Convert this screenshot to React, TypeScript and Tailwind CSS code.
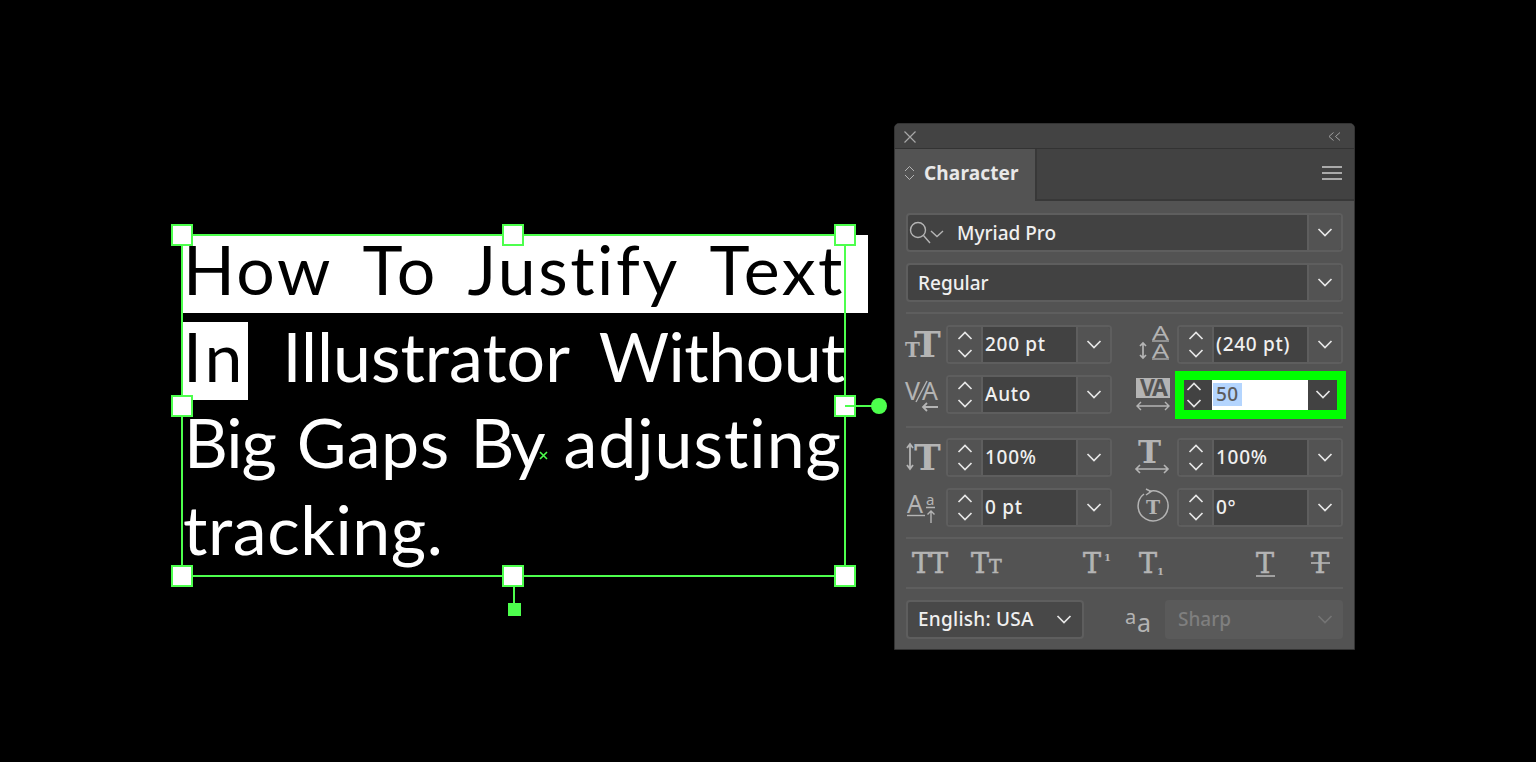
import type { ReactNode } from "react";

const ICON = "#b4b4b4";
const UI_FONT = "font-['Noto_Sans',sans-serif]";
const SERIF = "DejaVu Serif, serif";

function Chevron({ up = false, color = "#e6e6e6" }: { up?: boolean; color?: string }) {
  return (
    <svg width="16" height="9" viewBox="0 0 16 9" fill="none" stroke={color} strokeWidth="1.7">
      <path d={up ? "M1.5 8L8 1.5L14.5 8" : "M1.5 1L8 7.5L14.5 1"} />
    </svg>
  );
}

function Stepper() {
  return (
    <div className="flex h-full w-[33px] shrink-0 flex-col items-center justify-between bg-[#535353] py-[4px]">
      <Chevron up />
      <Chevron />
    </div>
  );
}

function Dropdown() {
  return (
    <div className="flex h-full w-[34px] shrink-0 items-center justify-center border-l-2 border-[#5e5e5e] bg-[#535353]">
      <Chevron />
    </div>
  );
}

function Field({ value }: { value: string }) {
  return (
    <div className="flex h-[39px] w-[166px] shrink-0 items-center overflow-hidden rounded-[4px] border-2 border-[#5e5e5e] bg-[#424242]">
      <Stepper />
      <div className="flex h-full flex-1 items-center border-l-2 border-[#5e5e5e] pl-[2px] text-[19px] font-medium tracking-[0.7px] text-[#f0f0f0]">
        {value}
      </div>
      <Dropdown />
    </div>
  );
}

function TrackingField() {
  return (
    <div className="-my-[5px] flex h-[48px] w-[171px] shrink-0 -translate-x-[2px] items-center overflow-hidden border-[9px] border-[#00ff00] bg-[#424242]">
      <div className="flex h-full w-[28px] shrink-0 flex-col items-start justify-between py-[2px] pl-[2px]">
        <Chevron up />
        <Chevron />
      </div>
      <div className="flex h-full flex-1 items-center bg-white pl-[1px] text-[19px] font-medium text-[#5c5c5c]">
        <span className="bg-[#b4d5fe] px-[3px] leading-[23px] tracking-[0.5px]">50</span>
      </div>
      <div className="flex h-full w-[29px] shrink-0 items-center justify-center">
        <Chevron />
      </div>
    </div>
  );
}

function Icon({ children }: { children: ReactNode }) {
  return (
    <svg width="40" height="39" viewBox="0 0 40 39" fill="none" stroke={ICON} className="shrink-0 overflow-visible">
      {children}
    </svg>
  );
}

function Glyph({ x, y, size, children, bold = false }: { x: number; y: number; size: number; children: string; bold?: boolean }) {
  return (
    <text x={x} y={y} fontSize={size} fontFamily={SERIF} fontWeight={bold ? 700 : 400} fill={ICON} stroke={bold ? "none" : ICON} strokeWidth={bold ? 0 : 0.6}>
      {children}
    </text>
  );
}

function SansGlyph({ x, y, size, width, children }: { x: number; y: number; size: number; width?: number; children: string }) {
  return (
    <text x={x} y={y} fontSize={size} fontFamily="Noto Sans, sans-serif" fill={ICON} stroke="none" textLength={width} lengthAdjust={width ? "spacingAndGlyphs" : undefined}>
      {children}
    </text>
  );
}

function Divider({ className }: { className: string }) {
  return <div className={`h-[2px] w-[437px] bg-[#5e5e5e] ${className}`} />;
}

function Param({ icon, children }: { icon: ReactNode; children: ReactNode }) {
  return (
    <div className="flex h-[39px] w-[206px] items-center">
      {icon}
      {children}
    </div>
  );
}

function ToolGlyph({ children, className = "" }: { children: ReactNode; className?: string }) {
  return (
    <svg width="40" height="30" viewBox="0 0 40 30" fill="none" stroke={ICON} className={`shrink-0 overflow-visible ${className}`}>
      {children}
    </svg>
  );
}

function CharacterPanel() {
  return (
    <div className={`h-[527px] w-[461px] shrink-0 overflow-hidden rounded-t-[5px] border border-[#333] bg-[#535353] ${UI_FONT}`}>
      <div className="flex h-[25px] items-center justify-between border-b border-[#333] bg-[#434343] pl-[8px] pr-[13px] pt-[1px]">
        <svg width="14" height="14" viewBox="0 0 14 14" stroke="#a8a8a8" strokeWidth="1.2">
          <path d="M1.5 1.5L12.5 12.5M12.5 1.5L1.5 12.5" />
        </svg>
        <svg width="13" height="9" viewBox="0 0 13 9" fill="none" stroke="#a0a0a0">
          <path d="M5.5 .5L1 4.5L5.5 8.5M12 .5L7.5 4.5L12 8.5" />
        </svg>
      </div>
      <div className="flex h-[52px]">
        <div className="flex w-[140px] items-center bg-[#535353] pb-[4px] pl-[9px]">
          <svg width="11" height="16" viewBox="0 0 11 16" fill="none" stroke="#b4b4b4">
            <path d="M1 6L5.5 1.5L10 6M1 10L5.5 14.5L10 10" />
          </svg>
          <span className="ml-[9px] text-[19px] font-bold leading-none tracking-[0.15px] text-[#e8e8e8]">Character</span>
        </div>
        <div className="flex flex-1 items-center justify-end border-b-2 border-l-2 border-[#383838] bg-[#424242] pb-[2px] pr-[12px]">
          <div className="flex w-[20px] flex-col gap-[4px]">
            <div className="h-[2px] bg-[#aaa]" />
            <div className="h-[2px] bg-[#aaa]" />
            <div className="h-[2px] bg-[#aaa]" />
          </div>
        </div>
      </div>

      <div className="px-[11px]">
        <div className="mt-[12px] flex h-[39px] w-[437px] items-center overflow-hidden rounded-[4px] border-2 border-[#5e5e5e] bg-[#424242]">
          <div className="flex h-full flex-1 items-center pl-[1px]">
            <svg width="40" height="26" viewBox="0 0 40 26" fill="none" stroke="#b4b4b4" strokeWidth="1.4" className="shrink-0">
              <circle cx="9" cy="10" r="7.5" />
              <path d="M14.5 15.5L21 23M22 11L28 16.5L34 11" />
            </svg>
            <span className="ml-[8px] pt-[1px] text-[19px] font-medium text-[#f0f0f0]">Myriad Pro</span>
          </div>
          <Dropdown />
        </div>
        <div className="mt-[11px] flex h-[39px] w-[437px] items-center overflow-hidden rounded-[4px] border-2 border-[#5e5e5e] bg-[#424242]">
          <div className="flex-1 pl-[10px] pt-[1px] text-[19px] font-medium text-[#f0f0f0]">Regular</div>
          <Dropdown />
        </div>

        <Divider className="mt-[10px]" />

        <div className="mt-[11px] grid w-[437px] grid-cols-[206px_206px] justify-between gap-y-[11px]">
          <Param
            icon={
              <Icon>
                <Glyph x={-1} y={32} size={20} bold>T</Glyph>
                <Glyph x={8} y={32} size={36} bold>T</Glyph>
              </Icon>
            }
          >
            <Field value="200 pt" />
          </Param>
          <Param
            icon={
              <Icon>
                <SansGlyph x={15} y={15} size={19} width={17}>A</SansGlyph>
                <path d="M15 16H32" strokeWidth="1.3" />
                <SansGlyph x={15} y={33} size={19} width={17}>A</SansGlyph>
                <path d="M15 34H32" strokeWidth="1.3" />
                <path d="M6 18V33M3 21L6 18L9 21M3 30L6 33L9 30" strokeWidth="1.7" />
              </Icon>
            }
          >
            <Field value="(240 pt)" />
          </Param>
          <Param
            icon={
              <Icon>
                <SansGlyph x={-1} y={25} size={25}>V</SansGlyph>
                <path d="M21 6L10 27" strokeWidth="1.4" />
                <SansGlyph x={16} y={25} size={25}>A</SansGlyph>
                <path d="M32 32H17M21 28L17 32L21 36" strokeWidth="1.8" />
              </Icon>
            }
          >
            <Field value="Auto" />
          </Param>
          <Param
            icon={
              <Icon>
                <rect x="-1" y="3" width="34" height="20" fill={ICON} stroke="none" />
                <text x="16" y="21" textAnchor="middle" fontSize="23" fontWeight="700" fontFamily="Noto Sans, sans-serif" fill="#535353" stroke="none" letterSpacing="-2">VA</text>
                <path d="M0 31H32M4 27L0 31L4 35M28 27L32 31L28 35" strokeWidth="1.4" />
              </Icon>
            }
          >
            <TrackingField />
          </Param>
        </div>

        <Divider className="mt-[12px]" />

        <div className="mt-[10px] grid w-[437px] grid-cols-[206px_206px] justify-between gap-y-[11px]">
          <Param
            icon={
              <Icon>
                <Glyph x={8} y={32} size={36} bold>T</Glyph>
                <path d="M4 6V31M1 10L4 6L7 10M1 27L4 31L7 27" strokeWidth="1.8" />
              </Icon>
            }
          >
            <Field value="100%" />
          </Param>
          <Param
            icon={
              <Icon>
                <Glyph x={1} y={25} size={31} bold>T</Glyph>
                <path d="M-1 31H31M3 27L-1 31L3 35M27 27L31 31L27 35" strokeWidth="1.6" />
              </Icon>
            }
          >
            <Field value="100%" />
          </Param>
          <Param
            icon={
              <Icon>
                <SansGlyph x={1} y={25} size={25}>A</SansGlyph>
                <path d="M1 27.5H19" strokeWidth="1.4" />
                <SansGlyph x={20} y={17} size={15}>a</SansGlyph>
                <path d="M20 19.5H29M25 35V23M21.5 26.5L25 23L28.5 26.5" strokeWidth="1.4" />
              </Icon>
            }
          >
            <Field value="0 pt" />
          </Param>
          <Param
            icon={
              <Icon>
                <path d="M12 3.5A15 15 0 1 1 7 6" strokeWidth="1.5" />
                <path d="M9 1L14 3.5L9 7" strokeWidth="1.5" />
                <Glyph x={9} y={26} size={19} bold>T</Glyph>
              </Icon>
            }
          >
            <Field value="0°" />
          </Param>
        </div>

        <Divider className="mt-[10px]" />

        <div className="mt-[9px] flex h-[30px] w-[437px] items-center pl-[2px]">
          <ToolGlyph>
            <Glyph x={4} y={25} size={27}>T</Glyph>
            <Glyph x={22} y={25} size={27}>T</Glyph>
          </ToolGlyph>
          <ToolGlyph className="ml-[20px]">
            <Glyph x={3} y={25} size={27}>T</Glyph>
            <Glyph x={21} y={25} size={19}>T</Glyph>
          </ToolGlyph>
          <ToolGlyph className="ml-[72px]">
            <Glyph x={3} y={25} size={27}>T</Glyph>
            <Glyph x={24} y={13} size={10} bold>1</Glyph>
          </ToolGlyph>
          <ToolGlyph className="ml-[16px]">
            <Glyph x={3} y={25} size={27}>T</Glyph>
            <Glyph x={21} y={27} size={10} bold>1</Glyph>
          </ToolGlyph>
          <ToolGlyph className="ml-[70px]">
            <Glyph x={10} y={25} size={27}>T</Glyph>
            <path d="M10 28H29" strokeWidth="1.6" />
          </ToolGlyph>
          <ToolGlyph className="ml-[15px]">
            <Glyph x={10} y={25} size={27}>T</Glyph>
            <path d="M10 15H29" strokeWidth="1.6" />
          </ToolGlyph>
        </div>

        <Divider className="mt-[9px]" />

        <div className="mt-[11px] flex w-[437px] items-center">
          <div className="flex h-[39px] w-[178px] items-center justify-between rounded-[4px] border-2 border-[#5e5e5e] bg-[#484848] px-[10px] text-[19px] font-medium tracking-[0.25px] text-[#f0f0f0]">
            English: USA
            <Chevron />
          </div>
          <svg width="40" height="39" viewBox="0 0 40 39" className="ml-[40px] shrink-0">
            <SansGlyph x={1} y={24} size={20}>a</SansGlyph>
            <SansGlyph x={13} y={32} size={25}>a</SansGlyph>
          </svg>
          <div className="ml-[1px] flex h-[39px] flex-1 items-center justify-between rounded-[4px] bg-[#5a5a5a] pl-[13px] pr-[10px] text-[19px] font-medium text-[#7f7f7f]">
            Sharp
            <Chevron color="#747474" />
          </div>
        </div>
      </div>
    </div>
  );
}

function Handle({ className }: { className: string }) {
  return <div className={`absolute h-[22px] w-[22px] border-2 border-[#4dff4d] bg-white ${className}`} />;
}

function TextFrame() {
  return (
    <div className="relative mt-[112px] h-[341px] w-[663px] shrink-0 font-['Lato',sans-serif] text-[68px] font-normal leading-[68.5px] text-white [font-variant-ligatures:none]">
      <div className="relative h-[86.5px]">
        <div className="absolute left-0 top-0 h-[78px] w-[686px] bg-white" />
        <div className="relative flex justify-between pl-[1px] tracking-[2.5px] text-black">
          <span>How</span>
          <span>To</span>
          <span>Justify</span>
          <span>Text</span>
        </div>
      </div>
      <div className="relative h-[86.5px]">
        <div className="absolute left-0 top-0 h-[78px] w-[66px] bg-white" />
        <div className="relative flex pl-[1px]">
          <span className="tracking-[3px] text-black">In</span>
          <span className="ml-[37px]">Illustrator</span>
          <span className="ml-auto tracking-[-0.5px]">Without</span>
        </div>
      </div>
      <div className="flex h-[86.5px] justify-between pl-[2px] pr-[3px]">
        <span className="tracking-[-1px]">Big</span>
        <span className="tracking-[0.5px]">Gaps</span>
        <span className="tracking-[-3px]">By</span>
        <span className="tracking-[1px]">adjusting</span>
      </div>
      <div className="h-[86.5px] pl-[1px] tracking-[0.6px]">tracking.</div>

      {/* selection frame and handles sit on top of the type */}
      <div className="absolute -left-px -top-px h-[343px] w-[665px] border-2 border-[#4dff4d]" />
      <Handle className="left-[-11px] top-[-11px]" />
      <Handle className="left-[320px] top-[-11px]" />
      <Handle className="left-[652px] top-[-11px]" />
      <Handle className="left-[-11px] top-[160px]" />
      <Handle className="left-[652px] top-[160px]" />
      <Handle className="left-[-11px] top-[330px]" />
      <Handle className="left-[320px] top-[330px]" />
      <Handle className="left-[652px] top-[330px]" />
      <div className="absolute left-[663px] top-[170px] h-[2px] w-[27px] bg-[#4dff4d]" />
      <div className="absolute left-[689px] top-[163px] h-[16px] w-[16px] rounded-full bg-[#4dff4d]" />
      <div className="absolute left-[331px] top-[352px] h-[16px] w-[2px] bg-[#4dff4d]" />
      <div className="absolute left-[326px] top-[368px] h-[13px] w-[13px] bg-[#4dff4d]" />
      <svg width="9" height="9" viewBox="0 0 9 9" stroke="#4dff4d" strokeWidth="1.6" className="absolute left-[357px] top-[216px]">
        <path d="M1 1L8 8M8 1L1 8" />
      </svg>
    </div>
  );
}

export default function App() {
  return (
    <div className="flex h-[762px] w-[1536px] items-start overflow-hidden bg-black pl-[182px] pt-[123px]">
      <TextFrame />
      <div className="ml-[49px]">
        <CharacterPanel />
      </div>
    </div>
  );
}
